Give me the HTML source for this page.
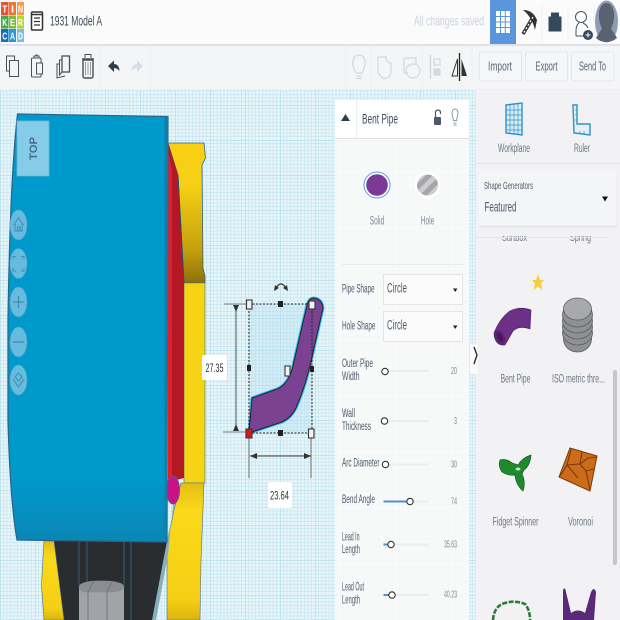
<!DOCTYPE html>
<html><head><meta charset="utf-8"><style>
html,body{margin:0;padding:0;width:620px;height:620px;overflow:hidden;background:#fff}
svg{display:block}
text{font-family:"Liberation Sans",sans-serif;fill:#4c5a6b}
</style></head><body>
<svg xmlns="http://www.w3.org/2000/svg" width="620" height="620" viewBox="0 0 620 620">
<defs>
<pattern id="g" width="35" height="35" patternUnits="userSpaceOnUse">
<rect width="35" height="35" fill="#e8f5f9"/>
<path d="M3.5 0V35M7 0V35M10.5 0V35M14 0V35M17.5 0V35M21 0V35M24.5 0V35M28 0V35M31.5 0V35M0 3.5H35M0 7H35M0 10.5H35M0 14H35M0 17.5H35M0 21H35M0 24.5H35M0 28H35M0 31.5H35" stroke="#c6e6f0" stroke-width=".7"/>
<path d="M0 0V35M0 0H35" stroke="#9fd6e9" stroke-width="1"/>
</pattern>
<linearGradient id="y1" x1="0" y1="0" x2="0" y2="1"><stop offset="0" stop-color="#f8cf12"/><stop offset=".3" stop-color="#f5d015"/><stop offset=".75" stop-color="#c6a30e"/><stop offset="1" stop-color="#8a7109"/></linearGradient>
<linearGradient id="y2" x1="0" y1="0" x2="0" y2="1"><stop offset="0" stop-color="#e3bd14"/><stop offset=".2" stop-color="#fbd91a"/><stop offset=".85" stop-color="#f5cf15"/><stop offset="1" stop-color="#d9b510"/></linearGradient>
<linearGradient id="b1" x1="0" y1="0" x2="0" y2="1"><stop offset="0" stop-color="#0099cc"/><stop offset=".85" stop-color="#0099cc"/><stop offset="1" stop-color="#0a86b5"/></linearGradient>
<pattern id="st" width="10" height="10" patternUnits="userSpaceOnUse" patternTransform="rotate(-45)"><rect width="10" height="10" fill="#a6a6a8"/><rect width="10" height="5" fill="#cdcdcf"/></pattern>
<pattern id="pg" width="7" height="7" patternUnits="userSpaceOnUse"><rect width="7" height="7" fill="#f8f9f9"/><path d="M0 0H7M0 0V7" stroke="#f1f3f3" stroke-width=".6"/></pattern>
</defs>

<!-- canvas -->
<rect x="0" y="90" width="480" height="530" fill="url(#g)"/>

<!-- back yellow/red -->
<path d="M168 143H204L205.500 158L202 165L203 268L205 276V283H184L178 175Z" fill="url(#y1)" stroke="#3c5f7e" stroke-width=".8"/>
<path d="M184 283H205V483H184Z" fill="#f6d415" stroke="#4a7090" stroke-width=".6"/>
<path d="M168 143L178 175L184 283V478L168 482Z" fill="#b51825"/>
<path d="M168 150L172 170V480H168Z" fill="#e0202e"/>
<path d="M178 175L184 283" stroke="#2b4d68" stroke-width=".9" fill="none"/>
<!-- lower -->
<path d="M181 483H204L201 560L200 620H167V545L174 510Z" fill="url(#y2)" stroke="#4a7090" stroke-width=".6"/>
<path d="M173 505L178 490L167 540L150 620L156 620L168 555Z" fill="#88b0ba"/>
<ellipse cx="173" cy="490" rx="6.500" ry="14" fill="#cc1188" stroke="#5b5f90"/>
<path d="M53 541H167L152 620H64Z" fill="#2a2d30"/>
<path d="M44 541H54L64 620H44L41.500 585Z" fill="url(#y2)" stroke="#4a7090" stroke-width=".6"/>
<path d="M79 541V585M87 541V583M124 541V585M131 541V620" stroke="#3f5f7c" stroke-width=".9"/>
<path d="M79 620V587Q80 581 101 581Q123 581 124 587V620Z" fill="#a1a3a6"/>
<path d="M79 587Q80 592 88 592H106Q123 592 124 587Q123 581 101 581Q80 581 79 587Z" fill="#8b8d90" stroke="#7d8ea0" stroke-width=".7"/>
<path d="M88 592V620M107 592V620M88 592L93 582M107 592L112 582" stroke="#5c7490" stroke-width=".8" fill="none"/>

<!-- blue block -->
<path d="M17.500 114L168 116.500L167 542L17 540Q10 500 8 420L8 320Q10 180 17.500 114Z" fill="url(#b1)" stroke="#2e6288" stroke-width="1.200"/>
<path d="M164.500 116.500H168L167 542H164.500Z" fill="#117ea8"/>
<rect x="17" y="121" width="32" height="55" fill="#85cce9" stroke="#6bb4d4" stroke-width=".8"/>
<text transform="translate(37,160) rotate(-90)" font-size="11" font-weight="700" textLength="23" lengthAdjust="spacingAndGlyphs" style="fill:#3f6f8c">TOP</text>
<g fill="#66bbdf" stroke="#4ba3c8" stroke-width=".6">
<ellipse cx="18.500" cy="225" rx="8.500" ry="15"/><ellipse cx="18.500" cy="263.500" rx="8.500" ry="15"/><ellipse cx="18.500" cy="302" rx="8.500" ry="15"/><ellipse cx="18.500" cy="342" rx="8.500" ry="15"/><ellipse cx="18.500" cy="380" rx="8.500" ry="15"/>
</g>
<g fill="none" stroke="#3f8eb0" stroke-width="1">
<path d="M13.500 225L18.500 218L23.500 225M15 224V231H22V224M17.500 231V227H20V231"/>
<path d="M13 259V256.500H16M21 256.500H24V259M13 268V271H16M21 271H24V268"/>
<path d="M13 302H24M18.500 296V308" stroke-width="1.300"/>
<path d="M13 342H24" stroke-width="1.300"/>
<path d="M18.500 373L22 377L18.500 381L15 377ZM13 379L18.500 387L24 379"/>
</g>

<!-- selection -->
<rect x="249" y="304" width="63" height="129" fill="#a9daf0" opacity=".3"/>
<path d="M224 304H249M223 432H249M249 438V478M311 438V478" stroke="#555" stroke-width=".8" fill="none"/>
<path d="M236 305V431" stroke="#444" stroke-width=".9"/>
<path d="M233 305L236 312L239 305ZM233 431L236 424L239 431Z" fill="#333"/>
<path d="M250 456H311" stroke="#444" stroke-width=".9"/>
<path d="M250 456L257 453V459ZM311 456L304 453V459Z" fill="#333"/>
<path id="pp" d="M249 433L252 398L277 389Q287 385 292 370L307 305Q309 298 314 298Q322 299 323 308L312 357Q306 385 296 408Q291 418 282 422Z" fill="none" stroke="#1fc4ea" stroke-width="3" stroke-linejoin="round"/>
<path d="M249 433L252 398L277 389Q287 385 292 370L307 305Q309 298 314 298Q322 299 323 308L312 357Q306 385 296 408Q291 418 282 422Z" fill="#7b4292" stroke="#2a2030" stroke-width="1" stroke-linejoin="round"/>
<path d="M249 304H312M249 433H311M249 304V433M312 304V433" fill="none" stroke="#222" stroke-width="1" stroke-dasharray="2 1.500"/>
<g fill="#222"><rect x="278" y="301" width="5" height="6"/><rect x="247" y="365" width="4" height="6"/><rect x="310" y="366" width="4" height="6"/><rect x="278" y="430" width="5" height="6"/></g>
<g fill="#f2f2f2" stroke="#333" stroke-width="1.100"><rect x="246.500" y="300" width="5.500" height="9"/><rect x="309" y="301" width="6" height="8"/><rect x="308.500" y="429" width="5.500" height="9"/><rect x="285" y="366" width="5" height="10"/></g>
<rect x="246" y="429" width="6" height="9" fill="#e01515" stroke="#333"/>
<circle cx="317" cy="306" r="1.300" fill="#2e6cc0"/>
<path d="M276 288Q281 280 286 288" fill="none" stroke="#333" stroke-width="1.300"/>
<path d="M274 291L275 285L279 288ZM288 291L287 285L283 288Z" fill="#333"/>
<rect x="202" y="355" width="25" height="25" rx="2" fill="#fff"/>
<text x="205.500" y="372" font-size="12" textLength="18" lengthAdjust="spacingAndGlyphs" style="fill:#333">27.35</text>
<rect x="268" y="482" width="24" height="26" rx="2" fill="#fff"/>
<text x="270" y="499.500" font-size="12" textLength="19" lengthAdjust="spacingAndGlyphs" style="fill:#333">23.64</text>

<!-- top bar -->
<rect x="0" y="0" width="620" height="44" fill="#fbfbfb"/>
<rect x="0" y="44" width="620" height="2" fill="#dfe3e9"/>
<rect x="0" y="46" width="620" height="44" fill="#f4f5f6"/>
<rect x="0" y="89" width="620" height="1" fill="#eceef0"/>
<!-- logo -->
<rect x="1" y="2" width="7.500" height="13" fill="#e8503a"/><rect x="9" y="2" width="7" height="13" fill="#f0762e"/><rect x="17" y="2" width="7" height="13" fill="#f79a4c"/>
<rect x="1" y="15.500" width="7.500" height="13" fill="#4ea64a"/><rect x="9" y="15.500" width="7" height="13" fill="#7fbc3c"/><rect x="17" y="15.500" width="7" height="13" fill="#b3d233"/>
<rect x="1" y="29" width="7.500" height="13" fill="#1270b8"/><rect x="9" y="29" width="7" height="13" fill="#2c94d8"/><rect x="17" y="29" width="7" height="13" fill="#78bde8"/>
<g font-size="10" font-weight="700" text-anchor="middle"><text x="4.800" y="12.500" textLength="5" lengthAdjust="spacingAndGlyphs" style="fill:#fff">T</text><text x="12.500" y="12.500" style="fill:#fff">I</text><text x="20.500" y="12.500" textLength="5" lengthAdjust="spacingAndGlyphs" style="fill:#fff">N</text><text x="4.800" y="26" textLength="5" lengthAdjust="spacingAndGlyphs" style="fill:#fff">K</text><text x="12.500" y="26" textLength="5" lengthAdjust="spacingAndGlyphs" style="fill:#fff">E</text><text x="20.500" y="26" textLength="5" lengthAdjust="spacingAndGlyphs" style="fill:#fff">R</text><text x="4.800" y="39.500" textLength="5" lengthAdjust="spacingAndGlyphs" style="fill:#fff">C</text><text x="12.500" y="39.500" textLength="5" lengthAdjust="spacingAndGlyphs" style="fill:#fff">A</text><text x="20.500" y="39.500" textLength="5" lengthAdjust="spacingAndGlyphs" style="fill:#fff">D</text></g>
<rect x="31.500" y="12" width="11" height="18" rx="1" fill="#fff" stroke="#333" stroke-width="1.500"/>
<path d="M32 14.500H42" stroke="#333" stroke-width="1.500"/>
<path d="M34 18H40M34 21.500H40M34 25H40" stroke="#333" stroke-width="1.300"/>
<text x="50" y="25.500" font-size="14" textLength="52" lengthAdjust="spacingAndGlyphs" style="fill:#3d4a5c">1931 Model A</text>
<text x="414" y="25.500" font-size="14" textLength="70" lengthAdjust="spacingAndGlyphs" style="fill:#ccd3dc">All changes saved</text>
<rect x="490" y="0" width="26" height="44" fill="#5a96dc"/>
<path d="M496 11H510V33H496Z" fill="#fff"/>
<path d="M500.500 11V33M505.300 11V33M496 16.500H510M496 22H510M496 27.500H510" stroke="#5a96dc" stroke-width="1"/>
<path d="M542 4V44M568 4V44M594 4V44" stroke="#f0f0f0" stroke-width="1"/>
<path d="M523 10Q533 10 537 20L535 30Q532 17 523 10Z" fill="#333"/>
<path d="M533 17L523 34" stroke="#333" stroke-width="3.500"/>
<path d="M533 17L523 34" stroke="#fff" stroke-width="1.200" stroke-dasharray="2 2"/>
<path d="M549 17V31H561V17H558.500V13H555.500V17H554.500V13H551.500V17Z" fill="#34495f" stroke="#34495f" stroke-linejoin="round" stroke-width="1"/>
<circle cx="581" cy="17" r="5.500" fill="#fff" stroke="#44505e" stroke-width="1"/>
<path d="M576 36V31Q576 25 579 23M583 23Q587 25 588 28M576 36H584" fill="none" stroke="#44505e" stroke-width="1"/>
<circle cx="588" cy="35" r="5" fill="#34495f"/>
<path d="M585.500 35H590.500M588 32.500V37.500" stroke="#fff" stroke-width="1"/>
<ellipse cx="606.500" cy="21.500" rx="11.500" ry="21" fill="#8f9db4"/>
<path d="M596 38Q600 31 602 29Q598 20 599 12Q601 3 606.500 3Q612 3 614 12Q615 20 611 29Q613 31 617 38Q612 42 606.500 42Q600 42 596 38Z" fill="#596270"/>

<!-- toolbar icons -->
<g fill="none" stroke="#4a4f55" stroke-width="1">
<rect x="6.500" y="56" width="8" height="15"/><rect x="9.500" y="60.500" width="9" height="16" fill="#f4f5f6"/>
<rect x="31.500" y="58" width="9.500" height="19" rx="1"/><path d="M34 58V56H36V55H37V56H39V58"/><rect x="36.500" y="63" width="6" height="11" fill="#f4f5f6"/>
<rect x="62" y="56" width="7.500" height="16" stroke-width="1.300"/><path d="M62 60H59.500V75L62 72M59 64H57V78L65 76"/>
<path d="M82 59H94" stroke-width="1.400"/><path d="M85 58V54.500H91V58"/><path d="M83 60V76Q83 78 85 78H91Q93 78 93 76V60Z" stroke-width="1.400"/><path d="M85.500 62V75M88 62V75M90.500 62V75" stroke="#888" stroke-width=".8"/>
</g>
<path d="M108 66L114 60.500V64Q119 64 119.500 71Q117 68 114 68V72Z" fill="#2f3e4e"/>
<path d="M143 66L137 60.500V64Q132 64 131.500 71Q134 68 137 68V72Z" fill="#d6dee6"/>
<path d="M100 46V90M150 46V90M346 46V90M371 46V90M422 46V90M472 46V80" stroke="#eceef0" stroke-width="1"/>
<g fill="none" stroke="#d2d8df" stroke-width="1.200">
<path d="M356 78.500H362M356.500 76H361.500M356 73Q352 66 353 61Q354 55 359 55Q364 55 365 61Q366 66 362 73Z"/>
<path d="M378 57H386Q386 63 391 63V73Q389 79 383 78.500L378 73Z"/>
<path d="M404 58H416V64M404 58V73H408"/><circle cx="413" cy="71" r="7"/>
<path d="M430.500 55V78.500" stroke-width="1.500"/><rect x="434" y="59" width="6" height="6"/><rect x="434" y="69" width="6" height="6" fill="#d2d8df"/>
</g>
<path d="M459.500 53V81" stroke="#222" stroke-width="1.300"/>
<path d="M457.500 59L452 76H457.500Z" fill="none" stroke="#333" stroke-width="1"/>
<path d="M461.500 59L467 76H461.500Z" fill="#333"/>
<g fill="#f5f6f7" stroke="#e4e6e9" stroke-width="1">
<rect x="479.500" y="52" width="42" height="29" rx="2"/><rect x="525.500" y="52" width="42" height="29" rx="2"/><rect x="571.500" y="52" width="42.500" height="29" rx="2"/>
</g>
<g font-size="13">
<text x="488" y="70.500" textLength="24" lengthAdjust="spacingAndGlyphs" style="fill:#5a6776">Import</text>
<text x="535.500" y="70.500" textLength="22" lengthAdjust="spacingAndGlyphs" style="fill:#5a6776">Export</text>
<text x="579" y="70.500" textLength="27" lengthAdjust="spacingAndGlyphs" style="fill:#5a6776">Send To</text>
</g>

<!-- right panel -->
<rect x="476" y="90" width="144" height="530" fill="#f2f2f4"/>
<path d="M476 163.500H620" stroke="#e3e4e7"/>
<g fill="none" stroke="#2a93c8" stroke-width="1.400">
<path d="M506 105L522 103V135L506 133Z" fill="#dcecf4"/>
<path d="M506 110H522M506 115H522M506 120H522M506 125H522M506 130H522M510 104.500V133.500M514 104V134M518 103.500V134.500" stroke-width=".7"/>
<path d="M573 105H577V124H590V135L574 133Z" fill="#e6eff4"/>
<path d="M575 110H577M575 115H577M575 120H577M580 131V133M584 131V134" stroke-width=".7"/>
</g>
<g font-size="11.500" text-anchor="middle">
<text x="514" y="152" textLength="32" lengthAdjust="spacingAndGlyphs" style="fill:#6b7785">Workplane</text>
<text x="582" y="152" textLength="16" lengthAdjust="spacingAndGlyphs" style="fill:#6b7785">Ruler</text>
</g>
<text x="502" y="241" font-size="11" textLength="25" lengthAdjust="spacingAndGlyphs" style="fill:#6b7785">Surtbox</text>
<text x="570" y="241" font-size="11" textLength="21" lengthAdjust="spacingAndGlyphs" style="fill:#6b7785">Spring</text>
<rect x="476" y="227" width="144" height="9" fill="#f2f2f4"/>
<path d="M476 237.500H609" stroke="#e3e4e7"/>
<rect x="479" y="170" width="138" height="57" rx="2" fill="#e6e7ea" transform="translate(0,1)"/>
<rect x="478.500" y="169.500" width="138" height="56" rx="2" fill="#f4f5f7"/>
<text x="484" y="189" font-size="10.500" textLength="49" lengthAdjust="spacingAndGlyphs">Shape Generators</text>
<text x="484.500" y="211.500" font-size="14" textLength="32" lengthAdjust="spacingAndGlyphs">Featured</text>
<path d="M602 196.500H608L605 201.500Z" fill="#111"/>
<path d="M538 274L540 280H544L541 283.500L542.500 290L538 286.500L533.500 290L535 283.500L532 280H536Z" fill="#f5cf3c"/>
<!-- bent pipe thumb -->
<path d="M494 333Q500 318 510 311Q520 306 531 310L530 329Q519 325 513 331Q508 340 505 345Q495 346 494 333Z" fill="#6e2f86" stroke="#4b1e5e" stroke-width=".6"/>
<ellipse cx="499.500" cy="337.500" rx="5" ry="8" fill="#5a2470" transform="rotate(-25 499.500 337.500)"/>
<ellipse cx="500" cy="337.500" rx="2.500" ry="5" fill="#45185a" transform="rotate(-25 500 337.500)"/>
<!-- ISO -->
<g fill="#8f9092" stroke="#5a5b5d" stroke-width=".8">
<ellipse cx="577.500" cy="339" rx="14" ry="13"/><ellipse cx="577.500" cy="333" rx="15" ry="12"/><ellipse cx="577.500" cy="327" rx="15" ry="12"/><ellipse cx="577.500" cy="321" rx="15" ry="12"/><ellipse cx="577.500" cy="315" rx="15" ry="12"/><ellipse cx="577.500" cy="309" rx="14" ry="11" fill="#a8a9ab"/>
</g>
<g font-size="11.500" text-anchor="middle">
<text x="515.500" y="382.500" textLength="30" lengthAdjust="spacingAndGlyphs" style="fill:#6b7785">Bent Pipe</text>
<text x="578.500" y="382.500" textLength="53" lengthAdjust="spacingAndGlyphs" style="fill:#6b7785">ISO metric thre...</text>
<text x="515.500" y="525.500" textLength="46" lengthAdjust="spacingAndGlyphs" style="fill:#6b7785">Fidget Spinner</text>
<text x="580.500" y="525.500" textLength="25" lengthAdjust="spacingAndGlyphs" style="fill:#6b7785">Voronoi</text>
</g>
<!-- fidget -->
<path d="M500 460Q506 458 512 463L518 465Q522 458 531 455Q530 466 524 470L522 474Q526 482 523 491Q516 485 515 475Q508 476 502 472Q498 466 500 460Z" fill="#1e8a2e" stroke="#0f5a1c" stroke-width=".7"/>
<ellipse cx="518" cy="469" rx="2.500" ry="1.500" fill="#cfe2cf"/>
<!-- voronoi -->
<path d="M570 448L597 456L590 491L559 477Z" fill="#cc6b1a" stroke="#7a3c0c" stroke-width="1"/>
<path d="M571 449L567 465L560 476M567 465L580 464L586 471L590 490M580 464L582 452M580 464L588 458L597 457M586 471L594 469M567 465L578 478" fill="none" stroke="#7a3c0c" stroke-width="1.100"/>
<!-- partial bottom -->
<path d="M493 620Q494 606 505 603Q515 600 525 604Q530 610 530 620" fill="none" stroke="#2f7a38" stroke-width="2.600" stroke-dasharray="5 1.500"/>
<path d="M563 620V590Q565 586 566 592L571 613Q578 608 585 613L591 592Q594 586 596 592L594 620Z" fill="#5a2a78"/>
<rect x="613" y="370" width="4" height="195" rx="2" fill="#c4c6c9"/>

<!-- collapse tab -->
<rect x="470" y="344" width="8" height="30" fill="#fafafa"/>
<path d="M474 347L477 355L474 364" fill="none" stroke="#222" stroke-width="1.300"/>

<!-- properties panel -->
<rect x="335" y="100" width="134" height="520" fill="url(#pg)"/>
<rect x="335" y="100" width="134" height="38" fill="#fff"/>
<path d="M335 138.500H469" stroke="#e0e3e8"/>
<path d="M356.500 100V138" stroke="#eef0f2"/>
<path d="M341 121H350L345.500 114Z" fill="#2f3e4e"/>
<text x="362" y="123.500" font-size="13.500" textLength="36" lengthAdjust="spacingAndGlyphs" style="fill:#3d4a5c">Bent Pipe</text>
<rect x="434" y="117" width="7" height="8" rx="1" fill="#4b5a6b"/>
<path d="M435.500 117V113Q435.500 110 438 110Q440.500 110 440.500 113V114" fill="none" stroke="#4b5a6b" stroke-width="1.200"/>
<path d="M453.500 123H456.500M453.500 125H456.500M453.500 120.500L452 114Q452 109 455 109Q458 109 458 114L456.500 120.500Z" fill="none" stroke="#8a98a6" stroke-width="1"/>
<circle cx="377" cy="185" r="13" fill="#fff" stroke="#5b99dc" stroke-width="1"/>
<circle cx="377" cy="185" r="10.800" fill="#7a3a96"/>
<circle cx="427.500" cy="185" r="13" fill="#fff"/>
<circle cx="427.500" cy="185" r="10.500" fill="url(#st)"/>
<text x="377" y="224.500" font-size="11.500" text-anchor="middle" textLength="14.500" lengthAdjust="spacingAndGlyphs" style="fill:#7d8793">Solid</text>
<text x="427.500" y="224.500" font-size="11.500" text-anchor="middle" textLength="13.500" lengthAdjust="spacingAndGlyphs" style="fill:#7d8793">Hole</text>
<path d="M342 264.500H463" stroke="#e8eaec"/>
<rect x="383.500" y="274.500" width="79" height="30" fill="#fbfbfb" stroke="#e2e4e7"/>
<rect x="383.500" y="311.500" width="79" height="30" fill="#fbfbfb" stroke="#e2e4e7"/>
<text x="387" y="292.500" font-size="13.500" textLength="20" lengthAdjust="spacingAndGlyphs" style="fill:#4c5a6b">Circle</text>
<text x="387" y="329.500" font-size="13.500" textLength="20" lengthAdjust="spacingAndGlyphs" style="fill:#4c5a6b">Circle</text>
<path d="M453 288.500H457.500L455.200 292ZM453 325.500H457.500L455.200 329Z" fill="#222"/>
<g font-size="11.500">
<text x="342" y="292.500" textLength="32.500" lengthAdjust="spacingAndGlyphs">Pipe Shape</text>
<text x="342" y="329.500" textLength="33.500" lengthAdjust="spacingAndGlyphs">Hole Shape</text>
<text x="342" y="367" textLength="31" lengthAdjust="spacingAndGlyphs">Outer Pipe</text>
<text x="342" y="380" textLength="17.500" lengthAdjust="spacingAndGlyphs">Width</text>
<text x="342" y="417" textLength="13" lengthAdjust="spacingAndGlyphs">Wall</text>
<text x="342" y="430" textLength="29" lengthAdjust="spacingAndGlyphs">Thickness</text>
<text x="342" y="466.500" textLength="37.500" lengthAdjust="spacingAndGlyphs">Arc Diameter</text>
<text x="342" y="503" textLength="33" lengthAdjust="spacingAndGlyphs">Bend Angle</text>
<text x="342" y="540.500" textLength="17.500" lengthAdjust="spacingAndGlyphs">Lead In</text>
<text x="342" y="553" textLength="18" lengthAdjust="spacingAndGlyphs">Length</text>
<text x="342" y="590.500" textLength="22" lengthAdjust="spacingAndGlyphs">Lead Out</text>
<text x="342" y="603.500" textLength="18" lengthAdjust="spacingAndGlyphs">Length</text>
</g>
<g stroke="#eceded" stroke-width="2" fill="none">
<path d="M385 371H429M385 421H429M385 464.500H429M410 501.500H429M391 544.500H429M392 595H429"/>
</g>
<path d="M383.500 501.500H408M383.500 544.500H389M383.500 595H390" stroke="#4f8fdc" stroke-width="2" fill="none"/>
<g fill="#fff" stroke="#333" stroke-width="1.100">
<circle cx="385" cy="371.500" r="3.200"/><circle cx="384.500" cy="421" r="3.200"/><circle cx="385.500" cy="464.500" r="3.200"/><circle cx="410" cy="501.500" r="3.200"/><circle cx="391" cy="544.500" r="3.200"/><circle cx="392" cy="595" r="3.200"/>
</g>
<g font-size="10.500" text-anchor="end">
<text x="457" y="374" textLength="6" lengthAdjust="spacingAndGlyphs" style="fill:#7f8994">20</text>
<text x="457" y="424" textLength="3" lengthAdjust="spacingAndGlyphs" style="fill:#7f8994">3</text>
<text x="457" y="467.500" textLength="6" lengthAdjust="spacingAndGlyphs" style="fill:#7f8994">30</text>
<text x="457" y="504.500" textLength="6" lengthAdjust="spacingAndGlyphs" style="fill:#7f8994">74</text>
<text x="457" y="547.500" textLength="13" lengthAdjust="spacingAndGlyphs" style="fill:#7f8994">35.63</text>
<text x="457" y="597.500" textLength="13" lengthAdjust="spacingAndGlyphs" style="fill:#7f8994">40.23</text>
</g>
</svg>
</body></html>
